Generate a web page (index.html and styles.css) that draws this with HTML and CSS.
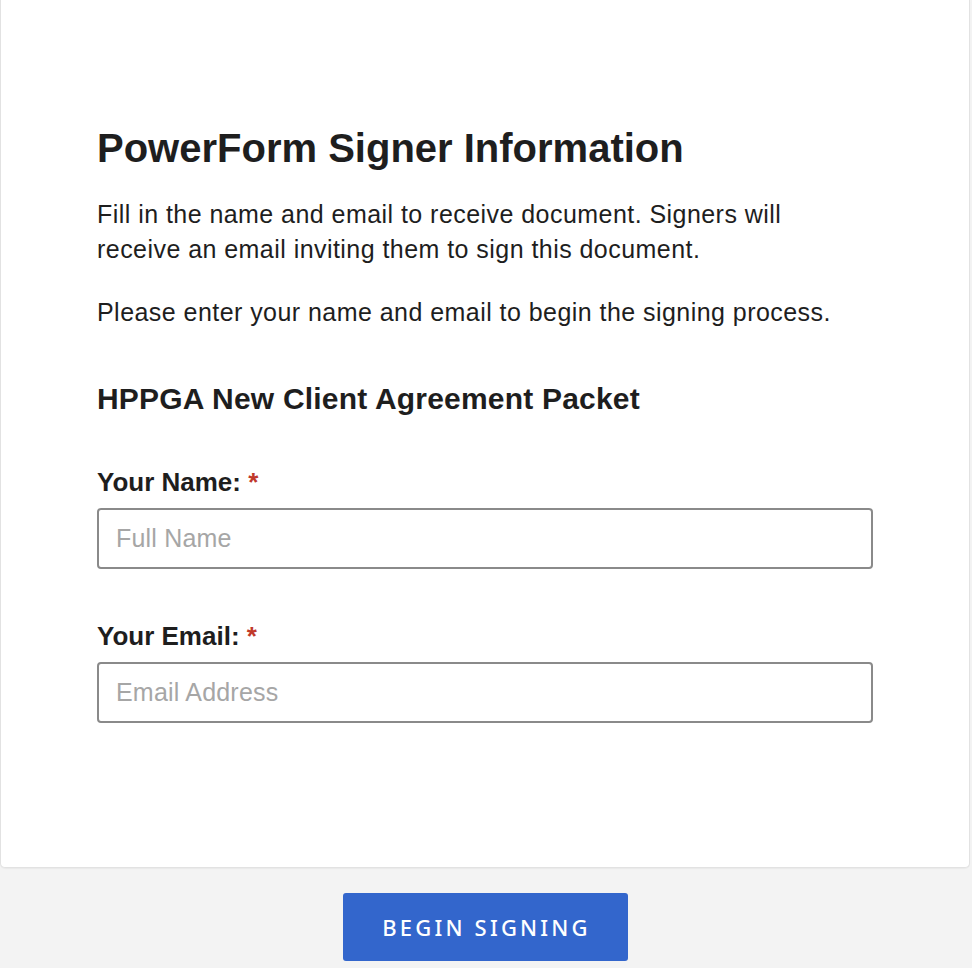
FILE: index.html
```html
<!DOCTYPE html>
<html lang="en">
<head>
<meta charset="utf-8">
<title>PowerForm Signer Information</title>
<link rel="stylesheet" href="styles.css">
</head>
<body>
<main class="page">
  <section class="card">
    <h1 class="title">PowerForm Signer Information</h1>
    <p class="intro">Fill in the name and email to receive document. Signers will receive an email inviting them to sign this document.</p>
    <p class="intro">Please enter your name and email to begin the signing process.</p>
    <h2 class="subtitle">HPPGA New Client Agreement Packet</h2>
    <div class="field">
      <label class="label" for="name">Your Name: <span class="req">*</span></label>
      <input class="input" id="name" type="text" placeholder="Full Name">
    </div>
    <div class="field">
      <label class="label" for="email">Your Email: <span class="req">*</span></label>
      <input class="input" id="email" type="email" placeholder="Email Address">
    </div>
  </section>
  <div class="actions">
    <button class="btn" type="button">BEGIN SIGNING</button>
  </div>
</main>
</body>
</html>
```
FILE: styles.css
```css
* { box-sizing: border-box; }
html, body { margin: 0; padding: 0; }
body {
  background: #f3f3f3;
  font-family: "Liberation Sans", Arial, sans-serif;
  color: #1e1e1e;
}
.page { width: 972px; }
.card {
  width: 970px;
  height: 868px;
  background: #fff;
  border: 1px solid #e2e2e2;
  border-top: none;
  border-radius: 0 0 5px 5px;
  padding: 126px 96px 0 96px;
  box-shadow: 0 1px 1px rgba(0,0,0,0.04);
}
.title {
  margin: 0;
  font-size: 40px;
  line-height: 44px;
  font-weight: 700;
}
.intro {
  margin: 27px 0 0;
  font-size: 25px;
  line-height: 35px;
  letter-spacing: 0.45px;
  max-width: 760px;
}
.intro + .intro { margin-top: 28px; }
.subtitle {
  margin: 51px 0 0;
  font-size: 30px;
  line-height: 36px;
  letter-spacing: 0.2px;
  font-weight: 700;
}
.field { margin-top: 50px; }
.field + .field { margin-top: 52px; }
.label {
  display: block;
  font-size: 26px;
  line-height: 30px;
  font-weight: 700;
}
.req { color: #c0392b; }
.input {
  display: block;
  margin-top: 11px;
  width: 776px;
  height: 61px;
  border: 2px solid #8a8a8a;
  border-radius: 4px;
  padding: 0 17px;
  font-family: "Liberation Sans", Arial, sans-serif;
  font-size: 25px;
  letter-spacing: 0.2px;
  color: #1e1e1e;
  background: #fff;
}
.input::placeholder { color: #a6a6a6; }
.actions {
  width: 970px;
  display: flex;
  justify-content: center;
  padding-top: 25px;
}
.btn {
  width: 285px;
  height: 68px;
  background: #3366cc;
  color: #fff;
  border: none;
  border-radius: 3px;
  font-family: "Noto Sans", "Open Sans", sans-serif;
  font-size: 22px;
  font-weight: 500;
  letter-spacing: 3.2px;
  padding: 0 0 0 3px;
}
```
